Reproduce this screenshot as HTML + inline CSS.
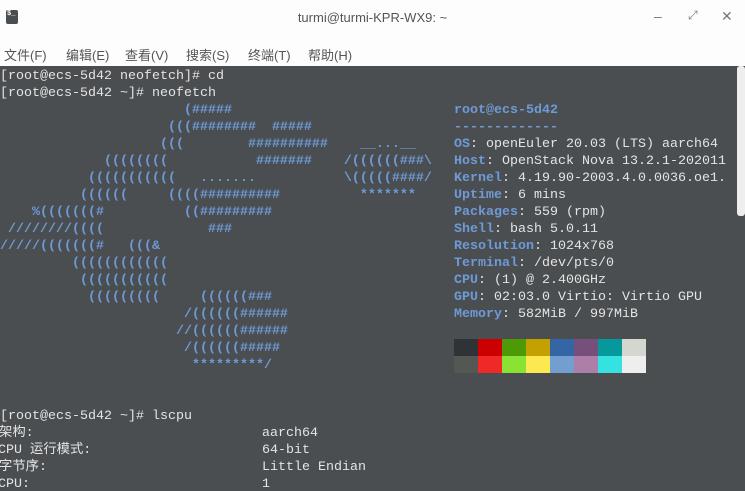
<!DOCTYPE html>
<html><head><meta charset="utf-8"><style>
body{margin:0;width:745px;height:491px;overflow:hidden;background:#fff;position:relative;font-family:"Liberation Sans","Noto Sans CJK SC",sans-serif}
#title{position:absolute;left:0;top:0;width:745px;height:36px;background:#fdfdfd}
#title .t{position:absolute;left:0;width:745px;top:10px;text-align:center;font-size:13px;color:#555}
#icon{position:absolute;left:6px;top:10px;width:11px;height:14px;background:#4a4e51;border-radius:2px;color:#fff;font:bold 7px "Liberation Mono",monospace;line-height:9px;padding-left:1px}
.ctl{position:absolute;top:8px;color:#777;font-size:14px}
#menu{position:absolute;top:36px;left:0;width:745px;height:30px;background:#fdfdfd}
#menu span{position:absolute;top:9px;font-size:13px;color:#555}
#term{position:absolute;left:0;top:66px;width:745px;height:425px;background:#4a4e51;overflow:hidden}
.l{position:absolute;white-space:pre;font:13.33px/17px "Liberation Mono","Noto Sans CJK SC",monospace;color:#e4e4e4}
.b{color:#6f9ad6;font-weight:bold}
#sb{position:absolute;left:737px;top:66px;width:8px;height:150px;background:#eee;border-radius:3px}
.sw{position:absolute;width:24px;height:17px}
</style></head><body>
<div id="title"><div id="icon">$_</div><div class="t">turmi@turmi-KPR-WX9: ~</div>
<span class="ctl" style="left:654px">–</span><span class="ctl" style="left:688px;font-size:12px">⤢</span><span class="ctl" style="left:721px">✕</span></div>
<div id="menu"><span style="left:4px">文件(F)</span><span style="left:66px">编辑(E)</span><span style="left:125px">查看(V)</span><span style="left:186px">搜索(S)</span><span style="left:248px">终端(T)</span><span style="left:308px">帮助(H)</span></div>
<div id="term">
<div class="l" style="top:2px;left:0">[root@ecs-5d42 neofetch]# cd</div>
<div class="l" style="top:19px;left:0">[root@ecs-5d42 ~]# neofetch</div>
<div class="l b" style="top:36px;left:0">                       (#####
                     (((########  #####
                    (((        ##########    __...__
             ((((((((           #######    /((((((###\
           (((((((((((   .......           \(((((####/
          ((((((     ((((##########          *******
    %(((((((#          ((#########
 ////////((((             ###
/////(((((((#   (((&
         ((((((((((((
          (((((((((((
           (((((((((     ((((((###
                       /((((((######
                      //((((((######
                       /((((((#####
                        *********/</div>
<div class="l" style="top:36px;left:454px"><span class="b">root@ecs-5d42</span>
<span class="b">-------------</span>
<span class="b">OS</span>: openEuler 20.03 (LTS) aarch64
<span class="b">Host</span>: OpenStack Nova 13.2.1-202011
<span class="b">Kernel</span>: 4.19.90-2003.4.0.0036.oe1.
<span class="b">Uptime</span>: 6 mins
<span class="b">Packages</span>: 559 (rpm)
<span class="b">Shell</span>: bash 5.0.11
<span class="b">Resolution</span>: 1024x768
<span class="b">Terminal</span>: /dev/pts/0
<span class="b">CPU</span>: (1) @ 2.400GHz
<span class="b">GPU</span>: 02:03.0 Virtio: Virtio GPU
<span class="b">Memory</span>: 582MiB / 997MiB</div>
<div class="sw" style="left:454px;top:273px;background:#2e3436"></div><div class="sw" style="left:478px;top:273px;background:#cc0000"></div><div class="sw" style="left:502px;top:273px;background:#4e9a06"></div><div class="sw" style="left:526px;top:273px;background:#c4a000"></div><div class="sw" style="left:550px;top:273px;background:#3465a4"></div><div class="sw" style="left:574px;top:273px;background:#75507b"></div><div class="sw" style="left:598px;top:273px;background:#06989a"></div><div class="sw" style="left:622px;top:273px;background:#d3d7cf"></div>
<div class="sw" style="left:454px;top:290px;background:#555753"></div><div class="sw" style="left:478px;top:290px;background:#ef2929"></div><div class="sw" style="left:502px;top:290px;background:#8ae234"></div><div class="sw" style="left:526px;top:290px;background:#fce94f"></div><div class="sw" style="left:550px;top:290px;background:#729fcf"></div><div class="sw" style="left:574px;top:290px;background:#ad7fa8"></div><div class="sw" style="left:598px;top:290px;background:#34e2e2"></div><div class="sw" style="left:622px;top:290px;background:#eeeeec"></div>
<div class="l" style="top:342px;left:0">[root@ecs-5d42 ~]# lscpu</div>
<div class="l" style="top:359px;left:-1px">架构:</div><div class="l" style="top:359px;left:262px">aarch64</div>
<div class="l" style="top:376px;left:-2px">CPU 运行模式:</div><div class="l" style="top:376px;left:262px">64-bit</div>
<div class="l" style="top:393px;left:-1px">字节序:</div><div class="l" style="top:393px;left:262px">Little Endian</div>
<div class="l" style="top:410px;left:-2px">CPU:</div><div class="l" style="top:410px;left:262px">1</div>
</div>
<div id="sb"></div>
</body></html>
